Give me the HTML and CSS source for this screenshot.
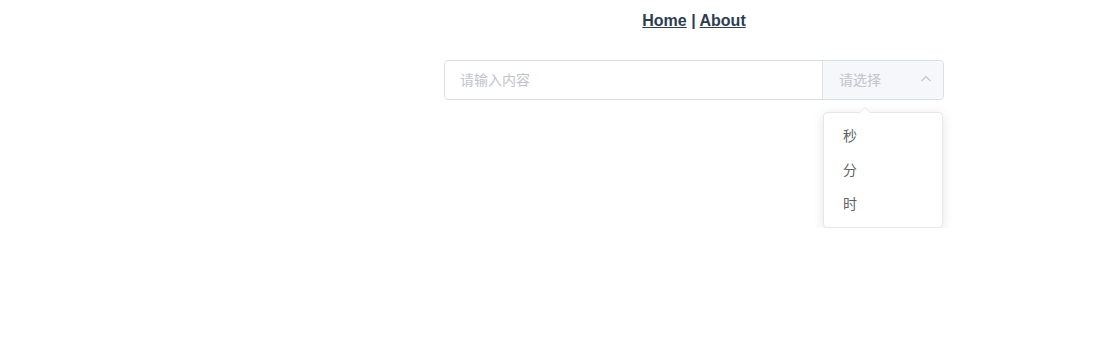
FILE: index.html
```html
<!DOCTYPE html>
<html>
<head>
<meta charset="utf-8">
<link rel="stylesheet" href="styles.css">
</head>
<body>
<div class="app">
  <nav class="nav"><a href="#">Home</a> | <a href="#">About</a></nav>
  <div class="field">
    <div class="input-group">
      <div class="input-main"><span class="ph">请输入内容</span></div>
      <div class="append">
        <span class="ph">请选择</span>
        <svg class="chev" width="12" height="12" viewBox="0 0 12 12"><path d="M1.5 8 L6 3.5 L10.5 8" fill="none" stroke="#c0c4cc" stroke-width="1.2"/></svg>
      </div>
    </div>
    <div class="dropdown">
      <div class="arrow"></div>
      <ul class="list">
        <li>秒</li>
        <li>分</li>
        <li>时</li>
      </ul>
    </div>
  </div>
</div>
</body>
</html>
```
FILE: styles.css
```css
html, body { margin: 0; padding: 0; background: #fff; }
body { font-family: "Liberation Sans", Arial, "Noto Sans CJK SC", sans-serif; }
.app { padding-left: 278px; display: flex; flex-direction: column; align-items: center; }
.nav { margin-top: 12px; font-size: 16px; font-weight: bold; color: #2c3e50; line-height: 18px; }
.nav a { color: #2c3e50; text-decoration: underline; }
.sep { font-weight: normal; }
.field { margin-top: 30px; width: 500px; display: flex; flex-direction: column; }
.input-group { display: flex; height: 40px; box-sizing: border-box; border: 1px solid #dcdfe6; border-radius: 4px; font-family: "Noto Sans CJK SC", sans-serif; font-size: 14px; }
.input-main { flex: 1; display: flex; align-items: center; padding-left: 15px; padding-bottom: 2px; }
.ph { color: #c0c4cc; }
.append { position: relative; width: 121px; border-left: 1px solid #dcdfe6; background: #f5f7fa; border-radius: 0 4px 4px 0; display: flex; align-items: center; padding-left: 16px; padding-bottom: 2px; box-sizing: border-box; }
.chev { position: absolute; right: 11px; top: 12px; }
.dropdown { position: relative; align-self: flex-end; margin-top: 12px; margin-right: 1px; width: 120px; background: #fff; border: 1px solid #e4e7ed; border-radius: 4px; box-shadow: 0 2px 12px 0 rgba(0,0,0,0.1); box-sizing: border-box; font-family: "Noto Sans CJK SC", sans-serif; }
.arrow { position: absolute; top: -6px; left: 35px; width: 0; height: 0; border-left: 6px solid transparent; border-right: 6px solid transparent; border-bottom: 6px solid #e4e7ed; }
.arrow::after { content: ""; position: absolute; left: -6px; top: 1px; border-left: 6px solid transparent; border-right: 6px solid transparent; border-bottom: 6px solid #fff; }
.list { list-style: none; margin: 0; padding: 5px 0 7px; }
.list li { height: 34px; line-height: 34px; padding-left: 19px; color: #606266; font-size: 14px; }
```
